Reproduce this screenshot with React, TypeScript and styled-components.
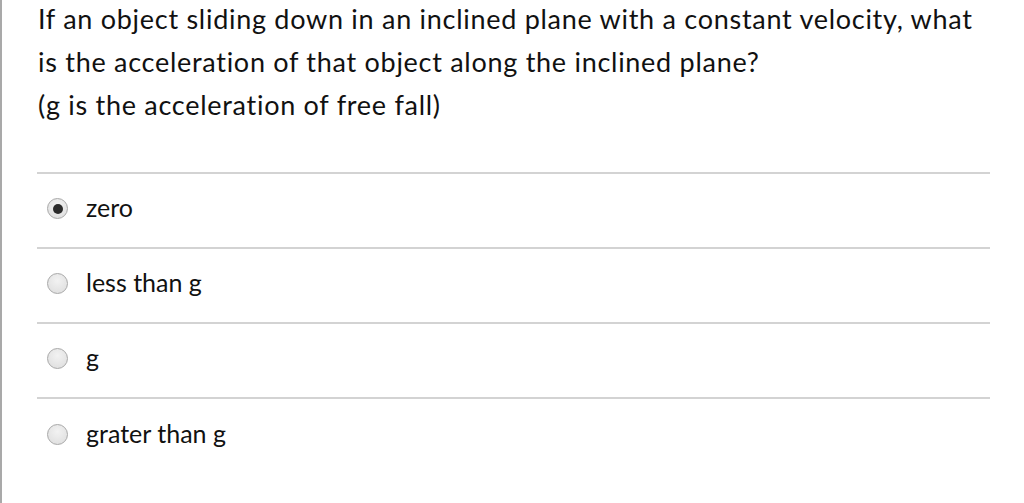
import React from 'react';
import styled, { createGlobalStyle } from 'styled-components';

const GlobalStyle = createGlobalStyle`
  html, body {
    margin: 0;
    padding: 0;
    background: #ffffff;
  }
  body {
    font-family: Lato, "Open Sans", sans-serif;
    color: #111;
  }
`;

const Page = styled.div`
  width: 1024px;
  height: 503px;
  box-sizing: border-box;
  border-left: 2px solid #a9a9a9;
  padding: 0 34px 0 35px;
  overflow: hidden;
`;

const Question = styled.p`
  margin: -3px 0 0;
  font-size: 27px;
  line-height: 43px;
  letter-spacing: 0.72px;
  padding-left: 1px;
`;

const Options = styled.div`
  margin-top: 46px;
  border-top: 2px solid #d3d3d3;
`;

const Option = styled.label<{ last?: boolean }>`
  display: flex;
  align-items: center;
  height: 75px;
  box-sizing: border-box;
  padding-bottom: 4px;
  border-bottom: ${(p) => (p.last ? 'none' : '2px solid #d3d3d3')};
  font-size: 25px;
`;

const Radio = styled.span<{ checked?: boolean }>`
  position: relative;
  width: 21px;
  height: 21px;
  margin-left: 10px;
  margin-right: 18px;
  border-radius: 50%;
  border: 1px solid #a8a8a8;
  background: radial-gradient(circle at 50% 35%, #f2f2f2 0%, #dcdcdc 100%);
  box-sizing: border-box;
  flex-shrink: 0;

  &::after {
    content: '';
    display: ${(p) => (p.checked ? 'block' : 'none')};
    position: absolute;
    left: 50%;
    top: 50%;
    width: 10px;
    height: 10px;
    margin: -5px 0 0 -5px;
    border-radius: 50%;
    background: #2b2b2b;
  }
`;

const OptionText = styled.span`
  position: relative;
  top: -2px;
`;

const answers = ['zero', 'less than g', 'g', 'grater than g'];

export default function App() {
  return (
    <>
      <GlobalStyle />
      <Page>
        <Question>
          If an object sliding down in an inclined plane with a constant velocity, what
          <br />
          is the acceleration of that object along the inclined plane?
          <br />
          (g is the acceleration of free fall)
        </Question>
        <Options>
          {answers.map((a, i) => (
            <Option key={a} last={i === answers.length - 1}>
              <Radio checked={i === 0} />
              <OptionText>{a}</OptionText>
            </Option>
          ))}
        </Options>
      </Page>
    </>
  );
}
